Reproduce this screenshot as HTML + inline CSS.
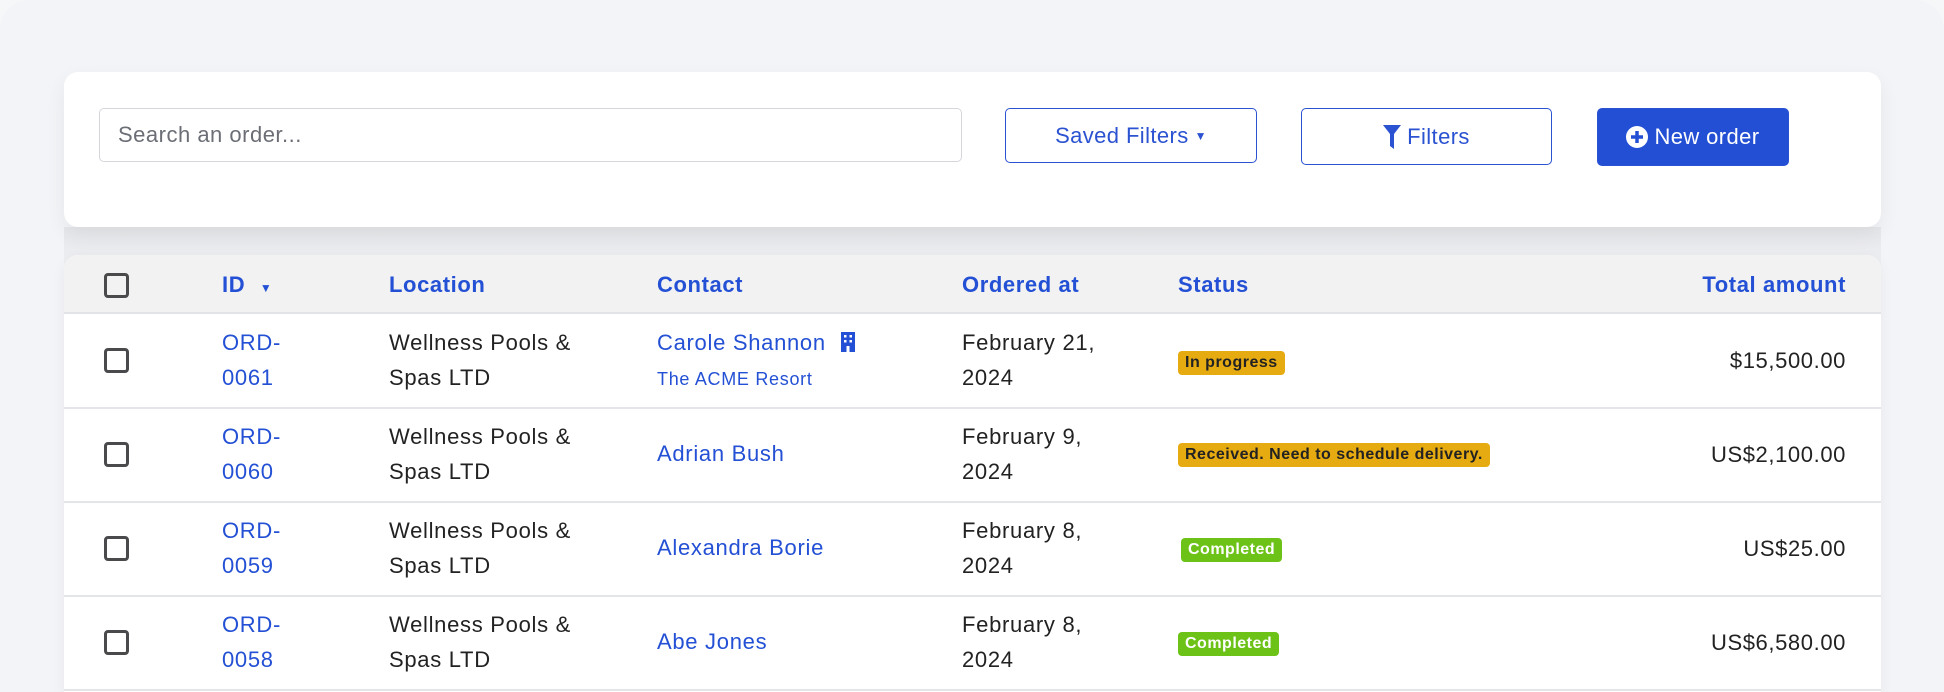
<!DOCTYPE html>
<html style="width:1944px;height:692px;overflow:hidden"><head><style>
*{box-sizing:border-box;margin:0;padding:0}
body{width:1944px;height:692px;overflow:hidden;background:#f6f7f9;font-family:"Liberation Sans",sans-serif;position:relative}
.outer{position:absolute;left:0;top:0;width:1944px;height:692px;background:#f3f4f7;border-radius:30px 30px 0 0}
.card{position:absolute;left:64px;top:72px;width:1817px;height:155px;background:#fff;border-radius:14px;box-shadow:0 8px 20px rgba(0,0,0,0.06)}
.band{position:absolute;left:64px;top:227px;width:1817px;height:40px;background:linear-gradient(#e6e7ea,#eeeff2)}
.input{position:absolute;left:99px;top:108px;width:863px;height:54px;border:1.5px solid #d4d6dc;border-radius:5px;font-size:22px;color:#6b6e75;padding:13px 18px;letter-spacing:0.5px}
.btn{position:absolute;top:108px;height:55px;border:1.5px solid #2a52d1;border-radius:5px;color:#2a52d1;font-size:22px;display:flex;align-items:center;justify-content:center;background:#fff;letter-spacing:0.4px}
.primary{background:#234fd4;color:#fff}
.table{position:absolute;left:64px;top:255px;width:1817px;height:440px;background:#fff;border-radius:14px 14px 0 0;overflow:hidden;box-shadow:0 4px 14px rgba(0,0,0,0.05)}
.head{position:absolute;left:0;top:0;width:100%;height:59px;background:#f2f2f3;border-bottom:2px solid #e2e3e6}
.th{position:absolute;top:17px;font-size:22px;font-weight:bold;color:#2350d4;letter-spacing:0.6px}
.row{position:absolute;left:0;width:100%;height:94px;border-bottom:2px solid #e4e5e8}
.cb{position:absolute;left:40px;width:25px;height:25px;border:3px solid #4a4a4d;border-radius:4px}
.t{position:absolute;font-size:22px;line-height:35px;color:#222;letter-spacing:0.7px}
.blue{color:#2350d4}
.badge{position:absolute;left:1114px;font-size:16px;font-weight:bold;padding:3px 7px;border-radius:4px;color:#222;letter-spacing:0.5px}
.y{background:#e7ab12}.g{background:#6cc217;color:#fff}
.amt{position:absolute;right:35px;font-size:22px;color:#222;letter-spacing:0.6px}
</style></head><body>
<div class="outer"></div>
<div class="band"></div>
<div class="card"></div>
<div class="input">Search an order...</div>
<div class="btn" style="left:1005px;width:252px">Saved Filters <span style="font-size:12px;margin-left:6px">▼</span></div>
<div class="btn" style="left:1301px;width:251px;height:57px"><svg width="18" height="24" viewBox="0 0 18 24" style="margin-right:6px"><path d="M0 0H18L11 9V24L7 21V9Z" fill="#2a52d1"/></svg>Filters</div>
<div class="btn primary" style="left:1597px;width:192px;height:58px"><svg width="22" height="22" viewBox="0 0 22 22" style="margin-right:6px"><circle cx="11" cy="11" r="11" fill="#fff"/><path d="M11 5V17M5 11H17" stroke="#234fd4" stroke-width="3.5"/></svg>New order</div>
<div class="table">
<div class="head">
<div class="cb" style="top:18px"></div>
<div class="th" style="left:158px">ID <span style="font-size:12px;margin-left:8px">▼</span></div>
<div class="th" style="left:325px">Location</div>
<div class="th" style="left:593px">Contact</div>
<div class="th" style="left:898px">Ordered at</div>
<div class="th" style="left:1114px">Status</div>
<div class="th" style="right:35px">Total amount</div>
</div>
<div class="row" style="top:60px">
<div class="cb" style="top:33px"></div>
<div class="t blue" style="left:158px;top:10px">ORD-<br>0061</div>
<div class="t" style="left:325px;top:10px">Wellness Pools &amp;<br>Spas LTD</div>
<div class="t blue" style="left:593px;top:10px">Carole Shannon <svg width="14" height="20" viewBox="0 0 14 20" style="margin-left:8px;vertical-align:-2px"><rect width="14" height="20" fill="#2350d4"/><g fill="#fff"><rect x="3" y="3" width="2.5" height="2.5"/><rect x="8.5" y="3" width="2.5" height="2.5"/><rect x="3" y="8" width="2.5" height="2.5"/><rect x="8.5" y="8" width="2.5" height="2.5"/><rect x="5.5" y="14" width="3" height="6"/></g></svg></div>
<div class="t blue" style="left:593px;top:47px;font-size:18px">The ACME Resort</div>
<div class="t" style="left:898px;top:10px">February 21,<br>2024</div>
<div class="badge y" style="top:36px">In progress</div>
<div class="amt" style="top:33px">$15,500.00</div>
</div>
<div class="row" style="top:154px">
<div class="cb" style="top:33px"></div>
<div class="t blue" style="left:158px;top:10px">ORD-<br>0060</div>
<div class="t" style="left:325px;top:10px">Wellness Pools &amp;<br>Spas LTD</div>
<div class="t blue" style="left:593px;top:27px">Adrian Bush</div>
<div class="t" style="left:898px;top:10px">February 9,<br>2024</div>
<div class="badge y" style="top:34px">Received. Need to schedule delivery.</div>
<div class="amt" style="top:33px">US$2,100.00</div>
</div>
<div class="row" style="top:248px">
<div class="cb" style="top:33px"></div>
<div class="t blue" style="left:158px;top:10px">ORD-<br>0059</div>
<div class="t" style="left:325px;top:10px">Wellness Pools &amp;<br>Spas LTD</div>
<div class="t blue" style="left:593px;top:27px">Alexandra Borie</div>
<div class="t" style="left:898px;top:10px">February 8,<br>2024</div>
<div class="badge g" style="top:35px;left:1117px">Completed</div>
<div class="amt" style="top:33px">US$25.00</div>
</div>
<div class="row" style="top:342px">
<div class="cb" style="top:33px"></div>
<div class="t blue" style="left:158px;top:10px">ORD-<br>0058</div>
<div class="t" style="left:325px;top:10px">Wellness Pools &amp;<br>Spas LTD</div>
<div class="t blue" style="left:593px;top:27px">Abe Jones</div>
<div class="t" style="left:898px;top:10px">February 8,<br>2024</div>
<div class="badge g" style="top:35px">Completed</div>
<div class="amt" style="top:33px">US$6,580.00</div>
</div>
</div>
</body></html>
